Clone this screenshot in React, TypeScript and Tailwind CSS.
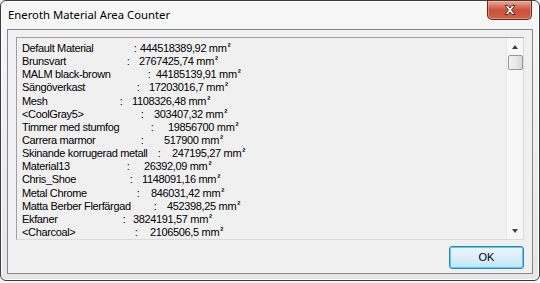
const rows = [
  { name: "Default Material", w: "w-[111px]", ml: "ml-[3px]", value: "444518389,92" },
  { name: "Brunsvart", w: "w-[104px]", ml: "ml-[9px]", value: "2767425,74" },
  { name: "MALM black-brown", w: "w-[125px]", ml: "ml-[5px]", value: "44185139,91" },
  { name: "Sängöverkast", w: "w-[114px]", ml: "ml-[9px]", value: "17203016,7" },
  { name: "Mesh", w: "w-[97px]", ml: "ml-[9px]", value: "1108326,48" },
  { name: "<CoolGray5>", w: "w-[118px]", ml: "ml-[10px]", value: "303407,32" },
  { name: "Timmer med stumfog", w: "w-[128px]", ml: "ml-[14px]", value: "19856700" },
  { name: "Carrera marmor", w: "w-[118px]", ml: "ml-[20px]", value: "517900" },
  { name: "Skinande korrugerad metall", w: "w-[135px]", ml: "ml-[11px]", value: "247195,27" },
  { name: "Material13", w: "w-[104px]", ml: "ml-[14px]", value: "26392,09" },
  { name: "Chris_Shoe", w: "w-[107px]", ml: "ml-[9px]", value: "1148091,16" },
  { name: "Metal Chrome", w: "w-[114px]", ml: "ml-[11px]", value: "846031,42" },
  { name: "Matta Berber Flerfärgad", w: "w-[131px]", ml: "ml-[10px]", value: "452398,25" },
  { name: "Ekfaner", w: "w-[100px]", ml: "ml-[7px]", value: "3824191,57" },
  { name: "<Charcoal>", w: "w-[112px]", ml: "ml-[12px]", value: "2106506,5" },
];

function CloseGlyph() {
  return (
    <svg width="14" height="12" viewBox="0 0 14 12">
      <path
        d="M2 1.5 L5 1.5 L7 4 L9 1.5 L12 1.5 L8.6 6 L12 10.5 L9 10.5 L7 8 L5 10.5 L2 10.5 L5.4 6 Z"
        fill="#ffffff"
        stroke="#5b2a22"
        strokeWidth="1"
        strokeLinejoin="round"
      />
    </svg>
  );
}

export default function App() {
  return (
    <div className="w-[540px] h-[283px] bg-[#f3f3f3] overflow-hidden">
      <div className="w-[540px] h-[281px] flex flex-col rounded-[6px] border border-[#3c3c3c] bg-gradient-to-b from-[#f7f7f7] via-[#eeeeee] to-[#e6e6e6] shadow-[inset_0_0_0_1px_#ffffff]">
        {/* title bar */}
        <div className="h-[28px] flex items-start justify-between">
          <div className="pl-[7px] pt-[6px] text-[11.3px] leading-[16px] text-black font-['Segoe_UI','Noto_Sans',sans-serif]">
            Eneroth Material Area Counter
          </div>
          <div className="mr-[7px] w-[45px] h-[19px] flex items-center justify-center rounded-b-[5px] border border-t-0 border-[#6a2519] bg-gradient-to-b from-[#e9a895] via-[#c9503a] to-[#d0624a] shadow-[inset_0_0_0_1px_rgba(255,200,180,0.45)]">
            <CloseGlyph />
          </div>
        </div>

        {/* client area */}
        <div className="flex-1 mx-[6px] mb-[6px] border border-[#828790] bg-[#f0f0f0] flex flex-col px-[8px] pt-[7px] font-['Liberation_Sans',Arial,sans-serif] text-[11px] tracking-[-0.35px] text-black">
          <div className="h-[203px] border border-[#a0a0a0] border-r-[#dadada] border-b-[#dadada] bg-[#f0f0f0] flex">
            <div className="flex-1 pl-[5px] pt-[4px] whitespace-pre">
              {rows.map((r) => (
                <div key={r.name} className="flex items-center h-[13.15px] leading-[13px]">
                  <span className={`${r.w} inline-block`}>{r.name}</span>
                  <span className="w-[4px] text-center">:</span>
                  <span className={r.ml}>
                    {r.value} mm<span className="ml-[1px] text-[9.5px] font-bold relative top-[-2px] leading-[0]">²</span>
                  </span>
                </div>
              ))}
            </div>
            {/* scrollbar */}
            <div className="w-[17px] bg-[#f7f7f7] border-l border-[#e8e8e8] flex flex-col items-center">
              <div className="h-[17px] flex items-center justify-center">
                <div className="w-0 h-0 border-l-[3.5px] border-r-[3.5px] border-b-[4px] border-l-transparent border-r-transparent border-b-[#404040]" />
              </div>
              <div className="w-[15px] h-[15px] rounded-[2px] border border-[#979797] bg-gradient-to-r from-[#f2f2f2] via-[#e9e9e9] to-[#d8d8d8]" />
              <div className="flex-1" />
              <div className="h-[17px] flex items-center justify-center">
                <div className="w-0 h-0 border-l-[3.5px] border-r-[3.5px] border-t-[4px] border-l-transparent border-r-transparent border-t-[#404040]" />
              </div>
            </div>
          </div>
          <div className="flex justify-end mt-[6px]">
            <button className="w-[75px] h-[23px] rounded-[3px] border border-[#3c7fb1] bg-gradient-to-b from-[#eaf6fd] via-[#dceefa] to-[#bee6fd] shadow-[inset_0_0_0_1px_#48d1fb] text-[11px] tracking-normal text-black font-['Liberation_Sans',Arial,sans-serif]">
              OK
            </button>
          </div>
        </div>
      </div>
    </div>
  );
}
